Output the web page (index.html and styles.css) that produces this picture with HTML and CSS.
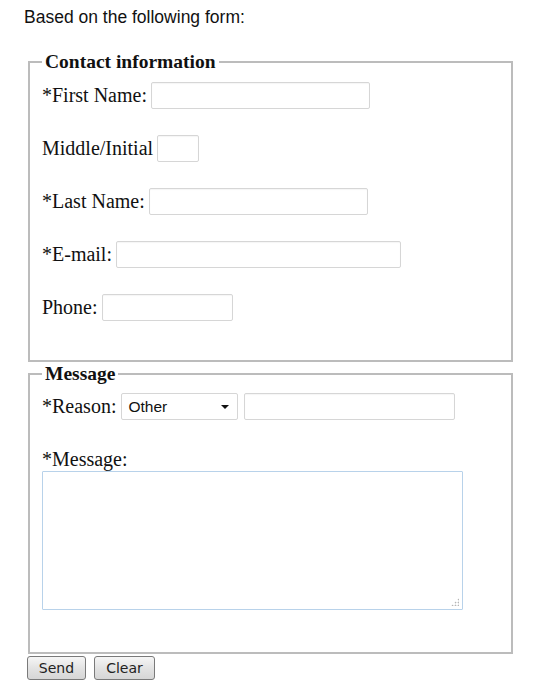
FILE: index.html
```html
<!DOCTYPE html>
<html>
<head>
<meta charset="utf-8">
<link rel="stylesheet" href="styles.css">
</head>
<body>
<p class="intro">Based on the following form:</p>
<form class="form">
  <fieldset class="group group-contact">
    <legend class="group-title">Contact information</legend>
    <div class="row"><label class="lbl">*First Name:</label><input class="field w-first" type="text"></div>
    <div class="row"><label class="lbl">Middle/Initial</label><input class="field w-mid" type="text"></div>
    <div class="row"><label class="lbl">*Last Name:</label><input class="field w-first" type="text"></div>
    <div class="row"><label class="lbl">*E-mail:</label><input class="field w-mail" type="text"></div>
    <div class="row last"><label class="lbl">Phone:</label><input class="field w-phone" type="text"></div>
  </fieldset>
  <fieldset class="group group-msg">
    <legend class="group-title">Message</legend>
    <div class="row reason"><label class="lbl">*Reason:</label>
      <div class="select"><span class="select-text">Other</span><span class="caret"></span></div>
      <input class="field w-reason" type="text">
    </div>
    <div class="msg-label lbl">*Message:</div>
    <div class="textarea"><span class="grip"></span></div>
  </fieldset>
  <div class="buttons">
    <button class="btn btn-send" type="button">Send</button>
    <button class="btn btn-clear" type="button">Clear</button>
  </div>
</form>
</body>
</html>
```
FILE: styles.css
```css
html, body {
  margin: 0;
  padding: 0;
  background: #ffffff;
}
body {
  font-family: "Liberation Serif", "Times New Roman", serif;
  color: #1a1a1a;
}
.intro {
  margin: 0;
  padding: 7px 0 0 24px;
  height: 43px;
  font-family: "Liberation Sans", Arial, sans-serif;
  font-size: 17.5px;
  line-height: 20px;
  color: #111;
}
.form {
  margin: 0 0 0 28px;
  width: 485px;
}
.group {
  margin: 0;
  border: 2px solid #bcbcbc;
  padding: 9px 12px 39px 12px;
  min-width: 0;
}
.group-msg {
  margin-top: 0;
  padding-top: 8px;
  padding-bottom: 42px;
}
.group-title {
  padding: 0 3px;
  font-weight: bold;
  font-size: 19.5px;
  line-height: 23px;
  color: #111;
}
.row {
  display: flex;
  align-items: center;
  gap: 4px;
  height: 27px;
  margin-bottom: 26px;
}
.row.last {
  margin-bottom: 0;
}
.lbl {
  font-size: 20px;
  line-height: 23px;
  color: #111;
  white-space: nowrap;
}
.field {
  box-sizing: border-box;
  height: 27px;
  border: 1px solid #d6d6d6;
  border-radius: 2px;
  background: #fff;
  padding: 0;
  margin: 0;
  box-shadow: inset 0 1px 1px rgba(0,0,0,0.04);
}
.w-first { width: 219px; }
.w-mid { width: 42px; }
.w-mail { width: 285px; }
.w-phone { width: 131px; }
.w-reason { width: 211px; }
.reason {
  gap: 5px;
  margin-bottom: 28px;
}
.select {
  box-sizing: border-box;
  width: 117px;
  height: 27px;
  border: 1px solid #d6d6d6;
  border-radius: 2px;
  display: flex;
  align-items: center;
  justify-content: space-between;
  padding: 0 8px 0 6px;
  margin-right: 1px;
  font-family: "Liberation Sans", Arial, sans-serif;
  font-size: 15.5px;
  color: #111;
}
.caret {
  width: 0;
  height: 0;
  border-left: 4px solid transparent;
  border-right: 4px solid transparent;
  border-top: 4px solid #111;
}
.msg-label {
  display: block;
  height: 23px;
}
.textarea {
  position: relative;
  box-sizing: border-box;
  width: 421px;
  height: 139px;
  border: 1px solid #b8d2ea;
  border-radius: 1px;
  background: #fff;
}
.grip {
  position: absolute;
  right: 3px;
  bottom: 3px;
  width: 8px;
  height: 8px;
  background:
    radial-gradient(circle, #b5b5b5 0.8px, transparent 1.1px) 0 0 / 3px 3px;
  clip-path: polygon(100% 0, 100% 100%, 0 100%);
}
.buttons {
  display: flex;
  gap: 8px;
  margin: 2px 0 0 -1px;
}
.btn {
  box-sizing: border-box;
  height: 24px;
  border: 1px solid #7a7a7a;
  border-radius: 3px;
  background: linear-gradient(#f6f6f6, #e3e3e3 50%, #d6d6d6);
  font-family: "DejaVu Sans", Tahoma, sans-serif;
  font-size: 14px;
  color: #222;
  padding: 0;
  margin: 0;
}
.btn-send { width: 59px; }
.btn-clear { width: 61px; }
```
